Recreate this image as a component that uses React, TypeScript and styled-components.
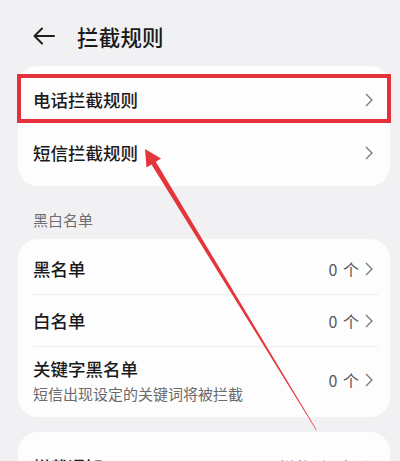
import React from 'react';
import styled, { createGlobalStyle } from 'styled-components';

const GlobalStyle = createGlobalStyle`
  html, body {
    margin: 0;
    padding: 0;
    background: #f1f1f4;
  }
  body {
    font-family: "Noto Sans CJK SC", "Noto Sans", sans-serif;
    color: #1b1b1b;
  }
`;

const Page = styled.div`
  position: relative;
  width: 400px;
  height: 461px;
  overflow: hidden;
  background: #f1f1f4;
  padding: 12px 10px 0 18px;
  box-sizing: border-box;
`;

const Header = styled.div`
  display: flex;
  align-items: center;
  height: 48px;
  margin-bottom: 6px;
  padding-left: 14px;
`;

const BackBtn = styled.div`
  width: 24px;
  height: 24px;
  display: flex;
  align-items: center;
  margin-right: 21px;
`;

const Title = styled.h1`
  margin: 0;
  font-size: 21.5px;
  font-weight: 500;
  letter-spacing: 0.2px;
  color: #1a1a1a;
`;

const Card = styled.div<{ $pad: number }>`
  background: #fdfdfe;
  border-radius: 20px;
  padding: ${({ $pad }) => $pad}px 0;
`;

const Row = styled.div<{ $h: number; $divider?: boolean }>`
  position: relative;
  display: flex;
  align-items: center;
  min-height: ${({ $h }) => $h}px;
  padding: 0 17px 0 15px;
  &::after {
    content: '';
    display: ${({ $divider }) => ($divider ? 'block' : 'none')};
    position: absolute;
    left: 15px;
    right: 12px;
    bottom: 0;
    height: 1px;
    background: #ededef;
  }
`;

const RowText = styled.div`
  flex: 1;
  display: flex;
  flex-direction: column;
  gap: 2px;
`;

const RowTitle = styled.div`
  font-size: 17.5px;
  font-weight: 500;
  line-height: 24px;
  color: #1b1b1b;
`;

const RowSub = styled.div`
  font-size: 15px;
  line-height: 21px;
  color: #6a6a6c;
`;

const Value = styled.span`
  font-size: 16px;
  color: #5a5a5c;
  margin-right: 6px;
  word-spacing: 2px;
`;

const SectionLabel = styled.div`
  font-size: 15px;
  line-height: 20px;
  color: #6e6e70;
  padding: 24px 15px 9px;
`;

const Gap = styled.div`
  height: 15px;
`;

const Highlight = styled.div`
  position: absolute;
  left: 17px;
  top: 74px;
  width: 374px;
  height: 49px;
  border: 4px solid #e5323a;
  box-sizing: border-box;
`;

const Overlay = styled.svg`
  position: absolute;
  left: 0;
  top: 0;
  pointer-events: none;
`;

const Chevron = () => (
  <svg width="8" height="14" viewBox="0 0 8 14">
    <path d="M1 1 L7 7 L1 13" fill="none" stroke="#78787a" strokeWidth="1.3" />
  </svg>
);

const BackArrow = () => (
  <svg width="24" height="24" viewBox="0 0 24 24">
    <path
      d="M22 12 H3 M10 4.5 L2.5 12 L10 19.5"
      fill="none"
      stroke="#1e1e1e"
      strokeWidth="2"
      strokeLinecap="round"
      strokeLinejoin="round"
    />
  </svg>
);

interface Item {
  title: string;
  sub?: string;
  value?: string;
}

const rules: Item[] = [{ title: '电话拦截规则' }, { title: '短信拦截规则' }];

const lists: Item[] = [
  { title: '黑名单', value: '0 个' },
  { title: '白名单', value: '0 个' },
  { title: '关键字黑名单', sub: '短信出现设定的关键词将被拦截', value: '0 个' },
];

const ListRow = ({ item, h, divider }: { item: Item; h: number; divider?: boolean }) => (
  <Row $h={h} $divider={divider}>
    <RowText>
      <RowTitle>{item.title}</RowTitle>
      {item.sub && <RowSub>{item.sub}</RowSub>}
    </RowText>
    {item.value && <Value>{item.value}</Value>}
    <Chevron />
  </Row>
);

export default function App() {
  return (
    <>
      <GlobalStyle />
      <Page>
        <Header>
          <BackBtn>
            <BackArrow />
          </BackBtn>
          <Title>拦截规则</Title>
        </Header>

        <Card $pad={7}>
          {rules.map((r) => (
            <ListRow key={r.title} item={r} h={53} />
          ))}
        </Card>

        <SectionLabel>黑白名单</SectionLabel>
        <Card $pad={4}>
          {lists.map((r, i) => (
            <ListRow
              key={r.title}
              item={r}
              h={r.sub ? 66 : 52}
              divider={i < lists.length - 1}
            />
          ))}
        </Card>

        <Gap />
        <Card $pad={11}>
          <ListRow item={{ title: '拦截通知', value: '拦截时通知' }} h={48} />
        </Card>

        <Highlight />
        <Overlay width="400" height="461" viewBox="0 0 400 461">
          <polygon
            points="145,149 146.5,167.5 151.5,164.5 316.2,430.2 316.6,429.8 155.8,161.8 161,158.5"
            fill="#e4353a"
          />
        </Overlay>
      </Page>
    </>
  );
}
